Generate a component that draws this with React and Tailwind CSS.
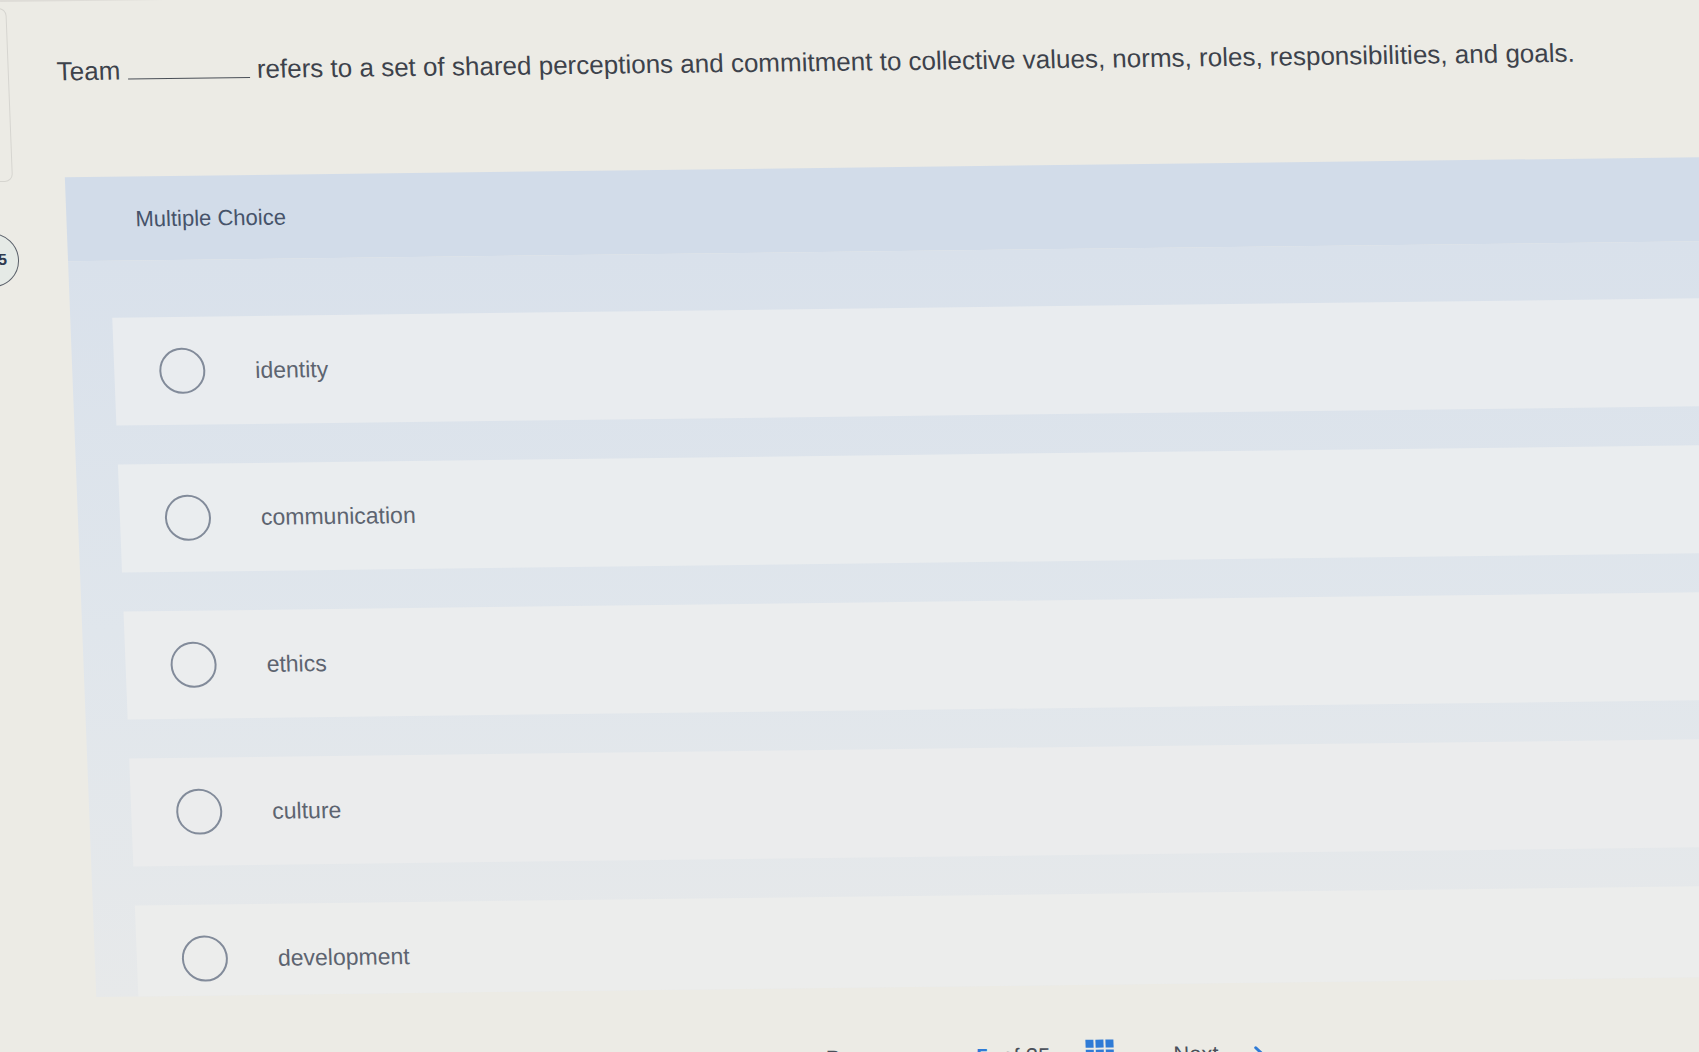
import { ChevronRight } from "lucide-react";

/* ───── Answer options ───── */
const options = [
  { label: "identity", bg: "bg-[#e9ecef]" },
  { label: "communication", bg: "bg-[#eaedef]" },
  { label: "ethics", bg: "bg-[#ebedee]" },
  { label: "culture", bg: "bg-[#ebeced]" },
  { label: "development", bg: "bg-[#ecedec]" },
];

function OptionRow({ label, bg }) {
  return (
    <div className={`flex h-[108px] shrink-0 items-center ${bg}`}>
      <div className="ml-[45px] h-[46px] w-[46px] shrink-0 rounded-full border-2 border-[#828b9a]" />
      <span className="ml-[50px] text-[23px] leading-[30px] text-[#5d6470]">{label}</span>
    </div>
  );
}

function GridIcon() {
  return (
    <div className="grid grid-cols-3 gap-[2px]">
      {Array.from({ length: 9 }).map((_, i) => (
        <div key={i} className="h-[8px] w-[8px] bg-[#2f7bd6]" />
      ))}
    </div>
  );
}

export default function App() {
  return (
    <div className="relative h-[1052px] w-full overflow-hidden bg-[#ecebe5] font-['Liberation_Sans',Arial,sans-serif]">
      {/* photo is a little tilted, so the sheet is too */}
      <div className="relative w-[1780px] origin-top-left [transform:rotate(-0.7deg)_skewX(1.5deg)]">
        {/* left sidebar edge + question number badge */}
        <div className="absolute left-[-20px] top-[8px] h-[174px] w-[26px] rounded-[8px] border border-[#d6d5d0]" />
        <div className="absolute left-[-45px] top-[233px] flex h-[54px] w-[54px] items-center justify-end rounded-full border-[1.5px] border-[#5b616b] bg-[#e5eae6] pr-[11px] text-[16px] font-bold text-[#2e3a50]">
          5
        </div>

        <div className="h-[2px] bg-[#dedcd7]" />

        {/* ───── Question ───── */}
        <p className="ml-[54px] mt-[52px] whitespace-nowrap text-[26px] leading-[36px] text-[#3d424b]">
          Team{" "}
          <span className="inline-block w-[122px] border-b border-[#4a4f57] align-baseline" />{" "}
          refers to a set of shared perceptions and commitment to collective values, norms, roles,
          responsibilities, and goals.
        </p>

        {/* ───── Multiple choice ───── */}
        <div className="ml-[58px] mt-[88px] flex h-[84px] items-center bg-[#d2dce9] pl-[69px] text-[22px] text-[#46536a]">
          Multiple Choice
        </div>

        <div className="ml-[58px] flex h-[736px] flex-col gap-[39px] overflow-hidden bg-linear-to-b from-[#d9e1eb] via-[#e0e6ec] to-[#e7e9ea] pl-[42px] pt-[57px]">
          {options.map((opt) => (
            <OptionRow key={opt.label} label={opt.label} bg={opt.bg} />
          ))}
        </div>

        {/* ───── Bottom nav (mostly cut off) ───── */}
        <div className="mt-[56px] flex h-[30px] items-start text-[22px] leading-[30px] text-[#4a505a]">
          <span className="ml-[785px]">Prev</span>
          <span className="ml-[105px] font-bold text-[#2f7bd6]">5</span>
          <span className="ml-[13px]">of 35</span>
          <div className="ml-[36px] mt-[-1px]">
            <GridIcon />
          </div>
          <span className="ml-[59px]">Next</span>
          <ChevronRight className="ml-[28px] mt-[3px] text-[#2f7bd6]" size={24} strokeWidth={3} />
        </div>
      </div>
    </div>
  );
}
